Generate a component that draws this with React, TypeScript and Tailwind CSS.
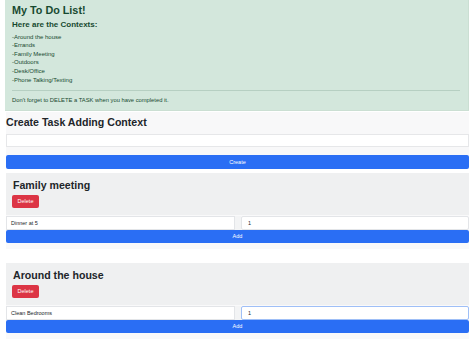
import React from "react";

const font = { fontFamily: '"Liberation Sans", Arial, sans-serif' };

function Card({ title, task, focused }: { title: string; task: string; focused?: boolean }) {
  return (
    <div className="bg-[#f9f9fa] pb-[6px]">
      <div className="bg-[#eff0f1] h-[42px] pl-[6px] pt-[5px] flex flex-col">
        <div className="text-[10.6px] leading-[14px] font-semibold text-[#212529] pl-[1px]">{title}</div>
        <div className="mt-[3px] w-[27px] h-[13px] bg-[#dc3545] rounded-[2px] flex items-center justify-center text-white text-[5.5px]">
          Delete
        </div>
      </div>
      <div className="flex h-[14px] mt-[1px]">
        <div className="w-[229px] h-[14px] bg-white border border-[#e3e5e8] flex items-center pl-[4px] text-[5.5px] text-[#212529]">
          {task}
        </div>
        <div className="w-[6px] bg-[#f3f4f5]" />
        <div
          className={
            "flex-1 h-[14px] bg-white border flex items-center pl-[6px] text-[5.5px] text-[#212529] rounded-[2px] " +
            (focused ? "border-[#9fbff7]" : "border-[#e3e5e8]")
          }
        >
          1
        </div>
      </div>
      <div className="h-[13px] bg-[#2a6ef4] rounded-[2px] flex items-center justify-center text-white text-[5.5px]">
        Add
      </div>
    </div>
  );
}

export default function App() {
  return (
    <div className="w-[474px] h-[342px] overflow-hidden bg-white" style={font}>
      <div className="ml-[5px] w-[464px] h-[111px] bg-[#d3e7dc] border-r border-b border-[#cbdfd3] px-[7px] pt-[3.5px] text-[#174a30]">
        <div className="text-[10.8px] leading-[13px] font-semibold">My To Do List!</div>
        <div className="text-[8px] leading-[10px] font-semibold mt-[3.5px]">Here are the Contexts:</div>
        <div className="text-[6px] leading-[8.6px] mt-[2.7px]">
          <div>-Around the house</div>
          <div>-Errands</div>
          <div>-Family Meeting</div>
          <div>-Outdoors</div>
          <div>-Desk/Office</div>
          <div>-Phone Talking/Texting</div>
        </div>
        <div className="mt-[5.5px] border-t border-[#b6cfc2] mr-[1px]" />
        <div className="text-[5.8px] leading-[8px] mt-[5px]">Don't forget to DELETE a TASK when you have completed it.</div>
      </div>
      <div className="mt-[1px] ml-[6px] w-[463px]">
        <div className="bg-[#f8f8f9] h-[22px] flex items-center text-[10.6px] font-semibold text-[#212529]">
          Create Task Adding Context
        </div>
        <div className="h-[13px] bg-white border border-[#e6e7e9]" />
        <div className="h-[8px] bg-[#f8f8f9]" />
        <div className="h-[14px] bg-[#2a6ef4] rounded-[2px] flex items-center justify-center text-white text-[5.5px]">
          Create
        </div>
        <div className="h-[4px]" />
        <Card title="Family meeting" task="Dinner at 5" />
        <div className="h-[14px]" />
        <Card title="Around the house" task="Clean Bedrooms" focused />
      </div>
    </div>
  );
}
